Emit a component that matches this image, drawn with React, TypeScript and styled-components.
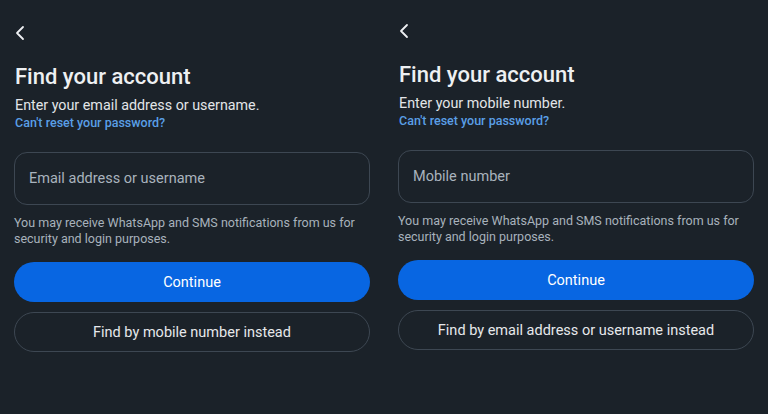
import * as React from 'react'
import styled, { createGlobalStyle } from 'styled-components'

const Global = createGlobalStyle`
    html, body {
        margin: 0;
        padding: 0;
        background: #1b2229;
    }
    * {
        box-sizing: border-box;
    }
`

const Page = styled.div`
    display: flex;
    width: 768px;
    height: 414px;
    background: #1b2229;
    font-family: Roboto, 'Noto Sans', sans-serif;
    color: #e6e8eb;
    overflow: hidden;
`
const Panel = styled.div<{ $top: number }>`
    flex: 0 0 384px;
    display: flex;
    flex-direction: column;
    padding: ${(p) => p.$top}px 14px 0 14px;
`
const BackButton = styled.div`
    width: 20px;
    height: 20px;
    display: flex;
    align-items: center;
    margin-left: 1px;
`
const Title = styled.h1`
    margin: 20px 0 0 1px;
    font-size: 22px;
    line-height: 28px;
    font-weight: 500;
    color: #eef0f2;
`
const Subtitle = styled.p`
    margin: 5px 0 0 1px;
    font-size: 14.3px;
    line-height: 18px;
    color: #e2e5e8;
`
const Link = styled.a`
    margin: 0 0 0 1px;
    font-size: 12.5px;
    line-height: 17px;
    font-weight: 500;
    color: #5a9fe6;
    text-decoration: none;
`
const Field = styled.div`
    margin-top: 21px;
    height: 53px;
    border: 1px solid #3d4752;
    border-radius: 13px;
    display: flex;
    align-items: center;
    padding-left: 14px;
    font-size: 14.5px;
    color: #a9b3bd;
`
const Note = styled.p`
    margin: 10px 0 0 0;
    font-size: 12.5px;
    line-height: 15.5px;
    color: #a8b2bc;
`
const PrimaryButton = styled.button`
    margin-top: 16px;
    height: 40px;
    border: none;
    border-radius: 20px;
    background: #0866e2;
    color: #ffffff;
    font-family: inherit;
    font-size: 14.5px;
    font-weight: 400;
`
const SecondaryButton = styled.button`
    margin-top: 10px;
    height: 40px;
    border: 1px solid #3d4752;
    border-radius: 20px;
    background: transparent;
    color: #e6e8eb;
    font-family: inherit;
    font-size: 14.5px;
    font-weight: 400;
`

const Chevron = () => (
    <svg width="10" height="16" viewBox="0 0 10 16" fill="none">
        <path d="M8 2 L2 8 L8 14" stroke="#eef0f2" strokeWidth="1.8" strokeLinecap="round" strokeLinejoin="round" />
    </svg>
)

const FindForm = ({
    top,
    subtitle,
    placeholder,
    alternative,
}: {
    top: number
    subtitle: string
    placeholder: string
    alternative: string
}) => (
    <Panel $top={top}>
        <BackButton>
            <Chevron />
        </BackButton>
        <Title>Find your account</Title>
        <Subtitle>{subtitle}</Subtitle>
        <Link>Can't reset your password?</Link>
        <Field>{placeholder}</Field>
        <Note>
            You may receive WhatsApp and SMS notifications from us for
            <br />
            security and login purposes.
        </Note>
        <PrimaryButton>Continue</PrimaryButton>
        <SecondaryButton>{alternative}</SecondaryButton>
    </Panel>
)

export default function App() {
    return (
        <>
            <Global />
            <Page>
                <FindForm
                    top={23}
                    subtitle="Enter your email address or username."
                    placeholder="Email address or username"
                    alternative="Find by mobile number instead"
                />
                <FindForm
                    top={21}
                    subtitle="Enter your mobile number."
                    placeholder="Mobile number"
                    alternative="Find by email address or username instead"
                />
            </Page>
        </>
    )
}
